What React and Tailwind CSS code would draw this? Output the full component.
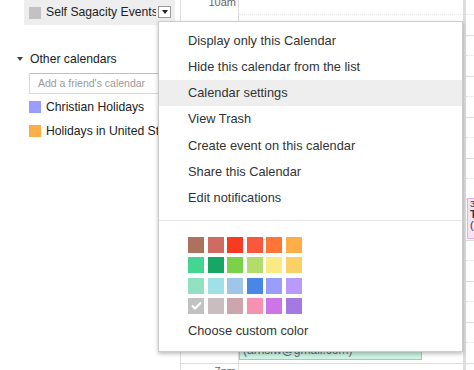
import React from 'react';

const palette = [
  ['#ac725e', '#d06b64', '#f83a22', '#fa573c', '#ff7537', '#ffad46'],
  ['#42d692', '#16a765', '#7bd148', '#b3dc6c', '#fbe983', '#fad165'],
  ['#92e1c0', '#9fe1e7', '#9fc6e7', '#4986e7', '#9a9cff', '#b99aff'],
  ['#c2c2c2', '#cabdbf', '#cca6ac', '#f691b2', '#cd74e6', '#a47ae2'],
];

const menuItems = [
  'Display only this Calendar',
  'Hide this calendar from the list',
  'Calendar settings',
  'View Trash',
  'Create event on this calendar',
  'Share this Calendar',
  'Edit notifications',
];

const hours = ['10am', '11am', '12pm', '1pm', '2pm', '3pm', '4pm', '5pm', '6pm', '7pm'];

function HourRows({ labels }) {
  return (
    <div className="-mt-[6px] flex flex-col">
      {hours.map((h) => (
        <div key={h} className="h-[41px] shrink-0 border-t border-[#dddddd] flex flex-col">
          {labels ? (
            <div className="text-right pr-[2px] pt-[1px] text-[11px] leading-[12px] text-[#666]">{h}</div>
          ) : (
            <div className="h-[20px] border-b border-dotted border-[#e5e5e5]" />
          )}
        </div>
      ))}
    </div>
  );
}

export default function App() {
  return (
    <div
      className="relative w-[474px] h-[370px] overflow-hidden bg-white flex"
      style={{ fontFamily: '"Liberation Sans", Arial, sans-serif' }}
    >
      {/* Sidebar */}
      <div className="w-[180px] shrink-0">
        <div className="ml-[24px] w-[151px] h-[25px] bg-[#eeeeee] flex items-center pl-[5px]">
          <span className="w-3 h-3 shrink-0 bg-[#c2c2c2]" />
          <span className="ml-[5px] w-[110px] overflow-hidden whitespace-nowrap text-[12.2px] text-[#222]">
            Self Sagacity Events
          </span>
          <span className="ml-[2px] w-[13px] h-[12px] -mt-[1px] border border-[#999] bg-white flex items-center justify-center">
            <span className="w-0 h-0 border-l-[3px] border-r-[3px] border-t-[4px] border-l-transparent border-r-transparent border-t-[#222]" />
          </span>
        </div>

        <div className="mt-[24px] h-[20px] flex items-center">
          <span className="ml-[17px] w-0 h-0 border-l-[3px] border-r-[3px] border-t-[4px] border-l-transparent border-r-transparent border-t-[#444]" />
          <span className="ml-[7px] text-[12.2px] text-[#222]">Other calendars</span>
        </div>

        <div className="mt-[4px] ml-[29px] w-[140px] h-[21px] border border-[#d9d9d9] border-t-[#c0c0c0] flex items-center pl-[8px] text-[10.5px] text-[#999] whitespace-nowrap">
          Add a friend's calendar
        </div>

        <div className="h-[24px] mt-[1px] flex items-center pl-[29px]">
          <span className="w-3 h-3 shrink-0 bg-[#9a9cff]" />
          <span className="ml-[5px] text-[12.2px] text-[#222] whitespace-nowrap">Christian Holidays</span>
        </div>
        <div className="h-[24px] flex items-center pl-[29px]">
          <span className="w-3 h-3 shrink-0 bg-[#ffad46]" />
          <span className="ml-[5px] text-[12.2px] text-[#222] whitespace-nowrap">Holidays in United States</span>
        </div>
      </div>

      {/* Calendar grid */}
      <div className="flex-1 flex h-[370px]">
        <div className="w-[58px] shrink-0 border-l border-[#dddddd]">
          <HourRows labels />
        </div>
        <div className="relative w-[228px] shrink-0 border-l border-r-[3px] border-[#dddddd]">
          <HourRows />
          <div className="absolute left-0 top-[281px] w-[183px] h-[79px] bg-[#cdf3e2] border border-[#e6a6c0] px-[3px] text-[12px] leading-[14px] text-[#5a6a86] overflow-hidden flex flex-col justify-end pb-[2px]">
            <div>Meeting with Arnold</div>
            <div>(arnsiw@gmail.com)</div>
          </div>
        </div>
        <div className="relative flex-1">
          <HourRows />
          <div className="absolute left-[1px] top-[198px] w-[40px] h-[41px] bg-[#f6e4f6] border border-[#e3b3dd] px-[2px] text-[11px] leading-[11px] text-[#333] overflow-hidden">
            <div className="text-[9px] leading-[10px]">3p</div>
            <div className="font-bold">Test</div>
            <div>(a</div>
          </div>
        </div>
      </div>

      {/* Context menu */}
      <div className="absolute left-[158px] top-[21px] w-[305px] h-[331px] bg-white border border-[#cccccc] shadow-[0_2px_4px_rgba(0,0,0,0.25)] pt-[5px]">
        {menuItems.map((item) => (
          <div
            key={item}
            className={`h-[26.3px] flex items-center pl-[29px] text-[12.8px] text-[#333] ${
              item === 'Calendar settings' ? 'bg-[#eeeeee]' : ''
            }`}
          >
            {item}
          </div>
        ))}
        <div className="mt-[9px] border-t border-[#e5e5e5]" />
        <div className="mt-[16px] ml-[29px] grid grid-cols-[repeat(6,16px)] gap-x-[3.6px] gap-y-[4.3px]">
          {palette.flat().map((c, i) => (
            <div key={c} className="w-4 h-4 flex items-center justify-center" style={{ backgroundColor: c }}>
              {i === 18 && (
                <svg width="11" height="9" viewBox="0 0 11 9">
                  <path d="M1 4.5 L4 7.5 L10 1.5" fill="none" stroke="white" strokeWidth="2" />
                </svg>
              )}
            </div>
          ))}
        </div>
        <div className="mt-[9px] h-[16px] flex items-center pl-[29px] text-[12.8px] text-[#333]">
          Choose custom color
        </div>
      </div>
    </div>
  );
}
